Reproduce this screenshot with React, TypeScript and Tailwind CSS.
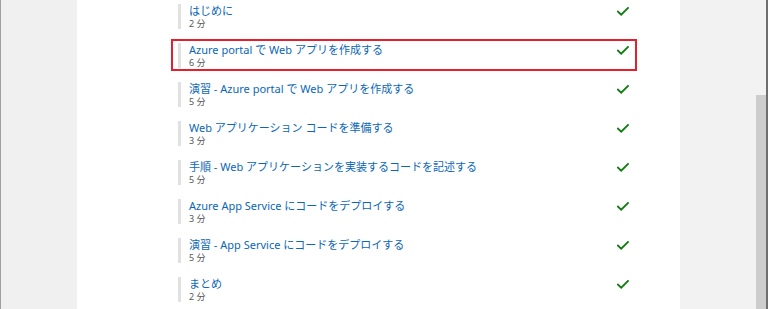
const units = [
  { title: 'はじめに', minutes: 2 },
  { title: 'Azure portal で Web アプリを作成する', minutes: 6, active: true },
  { title: '演習 - Azure portal で Web アプリを作成する', minutes: 5 },
  { title: 'Web アプリケーション コードを準備する', minutes: 3 },
  { title: '手順 - Web アプリケーションを実装するコードを記述する', minutes: 5 },
  { title: 'Azure App Service にコードをデプロイする', minutes: 3 },
  { title: '演習 - App Service にコードをデプロイする', minutes: 5 },
  { title: 'まとめ', minutes: 2 },
]

function Check() {
  return (
    <svg width="12" height="9" viewBox="0 0 12 9" className="mt-[7px] shrink-0">
      <path d="M1 4.6 L4.2 7.6 L11 1" fill="none" stroke="#107c10" strokeWidth="1.9" strokeLinecap="square" />
    </svg>
  )
}

export default function App() {
  return (
    <div
      className="flex h-[309px] w-full overflow-hidden"
      style={{ fontFamily: '"Segoe UI", "Noto Sans", "Noto Sans CJK JP", sans-serif' }}
    >
      {/* left gutter */}
      <div className="w-[77px] shrink-0 border-l border-[#a0a0a0] bg-[#f0f0f0]" />

      {/* module unit list */}
      <div className="w-[603px] shrink-0 bg-white pl-[94px]">
        <ul className="flex w-[466px] flex-col gap-[7px]">
          {units.map((u) => (
            <li
              key={u.title}
              className={
                'flex h-[32px] items-start justify-between pl-[7px] pr-[8px] ' +
                (u.active ? 'outline-2 -outline-offset-2 outline-[#e3202b]' : '')
              }
            >
              <div className="flex items-start gap-[8px]">
                <span className="mt-[4px] h-[25px] w-[3px] bg-[#e1e1e1]" />
                <div className="flex flex-col pt-[3px]">
                  <span className="text-[11px] leading-[15px] text-[#0a66b7]">{u.title}</span>
                  <span className="text-[9px] leading-[12px] text-[#555555]">{u.minutes} 分</span>
                </div>
              </div>
              <Check />
            </li>
          ))}
        </ul>
      </div>

      {/* right gutter with scrollbar */}
      <div className="flex flex-1 justify-end bg-[#f2f2f2]">
        <div className="mt-[95px] w-[10px] bg-[#cdcdcd]" />
        <div className="w-[2px] bg-[#6e6e70]" />
      </div>
    </div>
  )
}
